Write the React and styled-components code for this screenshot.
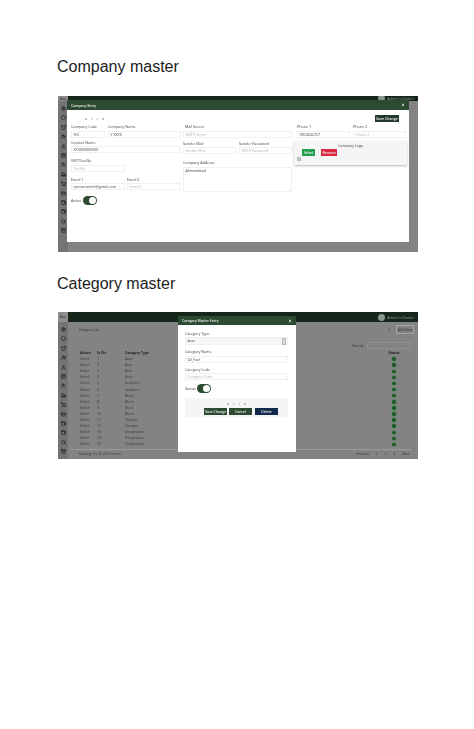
import React from "react";
import styled, { createGlobalStyle } from "styled-components";
import {
  Settings, Circle, Shirt, UserPlus, User, ShoppingBag, UserCheck, Truck, ShoppingCart,
  CreditCard, Wallet, Search, Archive, ImageOff, X,
} from "lucide-react";

const Global = createGlobalStyle`
  html, body { margin: 0; background: #fff; }
  body { font-family: "Liberation Sans", Arial, sans-serif; }
`;

const Page = styled.main`
  width: 474px;
  min-height: 729px;
  box-sizing: border-box;
  padding: 57px 56px 0 57px;
`;
const Heading = styled.h1`
  margin: ${(p) => p.$top}px 0 ${(p) => p.$bottom}px;
  font: 400 16px/20px "Liberation Sans", Arial, sans-serif;
  color: #1c1c1c;
`;
const Shot = styled.figure`
  position: relative;
  margin: 0 0 0 1px;
  width: 360px;
  height: ${(p) => p.$h}px;
  background: #838383;
  overflow: hidden;
  filter: blur(0.35px);
  display: grid;
  grid-template-columns: 10px 1fr;
  grid-template-rows: ${(p) => p.$bar}px 1fr;
  font-family: "Open Sans", Arial, sans-serif;
`;
const Brand = styled.div`
  background: #8d8d8d;
  color: #222;
  font-size: 3px;
  display: flex;
  align-items: center;
  justify-content: center;
`;
const TopBar = styled.div`
  background: #16261a;
  display: flex;
  align-items: center;
  justify-content: flex-end;
  gap: 2px;
  padding-right: 4px;
  color: #9a9a9a;
  font-size: 3.8px;
`;
const Avatar = styled.span`
  width: 7px;
  height: 7px;
  border-radius: 50%;
  background: #8a978c;
`;
const Side = styled.nav`
  background: #747474;
  display: flex;
  flex-direction: column;
  align-items: center;
  gap: 4.4px;
  padding-top: 5px;
  color: #1d1d1d;
  overflow: hidden;
  svg { width: 5px; height: 5px; flex: none; }
`;
const Content = styled.section`
  display: flex;
  flex-direction: column;
  padding: 3px 7px 0 3px;
  color: #2e2e2e;
  font-size: 3.4px;
  min-width: 0;
`;
const ListHead = styled.div`
  display: flex;
  justify-content: space-between;
  align-items: center;
  padding: 0 0 0 8px;
  height: 8px;
`;
const AddNew = styled.span`
  display: flex;
  align-items: center;
  gap: 6px;
  margin-right: -3px;
  white-space: nowrap;
  span:last-child {
    border: 0.5px solid #a5a5a5;
    padding: 1px 0;
    width: 16px;
    text-align: center;
  }
`;
const SearchRow = styled.div`
  margin-top: 9px;
  display: flex;
  justify-content: flex-end;
  align-items: center;
  gap: 3px;
  height: 6px;
  i { display: block; width: 42px; height: 5px; border: 0.5px solid #8f8f8f; }
`;
const Table = styled.table`
  margin-top: 2px;
  width: 100%;
  border-collapse: collapse;
  table-layout: fixed;
  th { font-weight: 700; color: #1f1f1f; text-align: left; padding: 0; }
  th:last-child { text-align: center; }
  td { padding: 0; color: #373737; }
  th:first-child, td:first-child { padding-left: 9px; }
  tr { height: 6.1px; }
  th, td { line-height: 6.1px; white-space: nowrap; }
`;
const Dot = styled.span`
  display: block;
  width: 3.5px;
  height: 3.5px;
  margin: 0 auto;
  border-radius: 50%;
  background: #1d5a28;
  box-shadow: 0 0 1px 0.5px #4a8f55;
`;
const TableFoot = styled.div`
  margin-top: 1px;
  padding: 0 0 0 8px;
  border-top: 0.5px solid #9a9a9a;
  display: flex;
  justify-content: space-between;
  align-items: center;
  height: 8px;
  font-size: 3.1px;
`;
const Pager = styled.div`
  display: flex;
  gap: 7px;
  padding-right: 2px;
`;

const Modal = styled.div`
  position: absolute;
  left: ${(p) => p.$left}px;
  top: ${(p) => p.$top}px;
  width: ${(p) => p.$w}px;
  height: ${(p) => p.$h}px;
  background: #fff;
  display: flex;
  flex-direction: column;
  color: #3d3d3d;
  font-size: 3.7px;
`;
const ModalHead = styled.header`
  flex: none;
  height: ${(p) => p.$h}px;
  background: #2c4a31;
  color: #f1f1f1;
  font-size: 3.4px;
  font-weight: 600;
  display: flex;
  align-items: center;
  justify-content: space-between;
  padding: 0 4px;
  svg { width: 4px; height: 4px; }
`;
const CompanyBody = styled.div`
  position: relative;
  flex: 1;
  display: grid;
  grid-template-columns: 110px 109px 113px;
  column-gap: 2px;
  padding: 14px 3px 0 4px;
`;
const Nav = styled.div`
  display: flex;
  justify-content: center;
  gap: 4px;
  color: #555;
  font-size: 3.6px;
  font-weight: 700;
`;
const TopNav = styled(Nav)`
  position: absolute;
  left: 18px;
  top: 6px;
`;
const SaveTop = styled.button`
  position: absolute;
  right: 10px;
  top: 5px;
  width: 24px;
  height: 7px;
  padding: 0;
  border: 0;
  background: #25392b;
  color: #eee;
  font: 600 3.5px "Open Sans", Arial, sans-serif;
`;
const Col = styled.div`
  display: flex;
  flex-direction: column;
  gap: ${(p) => p.$gap || 0}px;
`;
const Row = styled.div`
  display: grid;
  grid-template-columns: ${(p) => p.$cols};
  column-gap: ${(p) => p.$gap ?? 3}px;
  margin-top: ${(p) => p.$top || 0}px;
  padding-left: ${(p) => p.$pad || 0}px;
`;
const Field = styled.label`
  display: flex;
  flex-direction: column;
  gap: 1.5px;
  line-height: 5px;
`;
const FieldIndent = styled(Field)`
  > span { padding-left: 2px; }
`;
const Spaced = styled.div`
  margin-top: ${(p) => p.$top}px;
`;
const Input = styled.div`
  position: relative;
  height: ${(p) => p.$h || 7}px;
  box-sizing: border-box;
  border: 0.5px solid #f0f0f0;
  padding: 1px 1.5px;
  line-height: 4.5px;
  font-size: 3.6px;
  color: ${(p) => (p.$ph ? "#b4b4b4" : "#444")};
  background: #fff;
`;
const SelectBox = styled(Input)`
  display: flex;
  justify-content: space-between;
  align-items: center;
  background: #f6f6f6;
  height: 8px;
  color: #555;
  i { width: 4px; height: 7px; background: #ddd; border: 0.5px solid #b9b9b9; box-sizing: border-box; }
`;
const LogoCard = styled.div`
  margin-top: 3px;
  height: 24px;
  background: #f5f5f5;
  box-shadow: 0 1px 2px rgba(0, 0, 0, 0.28);
  display: flex;
  flex-direction: column;
  padding: 2px 3px;
  box-sizing: border-box;
  p { margin: 0; text-align: center; line-height: 5px; }
  svg { width: 4px; height: 4px; color: #666; margin-top: 1px; }
`;
const LogoButtons = styled.div`
  display: flex;
  gap: 6px;
  padding-left: 5px;
  margin-top: 1px;
`;
const Btn = styled.button`
  height: ${(p) => p.$h || 7}px;
  width: ${(p) => p.$w}px;
  margin-left: ${(p) => p.$ml || 0}px;
  padding: 0;
  border: 0;
  background: ${(p) => p.$bg};
  color: #eee;
  font: 600 3.4px "Open Sans", Arial, sans-serif;
`;
const ToggleRow = styled.div`
  display: flex;
  align-items: center;
  gap: 1.5px;
  margin-top: ${(p) => p.$top || 0}px;
`;
const Toggle = styled.span`
  display: block;
  width: 14px;
  height: 9px;
  border-radius: 5px;
  background: #2b4a30;
  position: relative;
  &::after {
    content: "";
    position: absolute;
    right: 1px;
    top: 1px;
    width: 7px;
    height: 7px;
    border-radius: 50%;
    background: #fff;
  }
`;
const CategoryBody = styled.div`
  flex: 1;
  display: flex;
  flex-direction: column;
  gap: 4px;
  padding: 5.5px 8px 0 7px;
`;
const ActionPanel = styled.div`
  margin-top: 1px;
  height: 19px;
  background: #f5f5f5;
  display: flex;
  flex-direction: column;
  align-items: center;
  padding-top: 3px;
  box-sizing: border-box;
  gap: 2px;
`;
const ActionButtons = styled.div`
  display: flex;
  gap: 2px;
  margin-left: 9px;
`;

const icons = [Settings, Circle, Shirt, UserPlus, User, ShoppingBag, UserCheck, Truck, ShoppingCart, CreditCard, Wallet, Wallet, Search, Archive];
const types = ["Area","Area","Area","Area","Southern","Southern","Block","Block","Block","Block","Charges","Charges","Designation","Designation","Designation"];

function Sidebar() {
  return <Side>{icons.map((I, i) => <I key={i} strokeWidth={3} />)}</Side>;
}
const F = ({ label, value, ph, h }) => (
  <Field>{label}<Input $ph={ph} $h={h}>{value || ph}</Input></Field>
);
const Arrows = () => <><span>«</span><span>‹</span><span>›</span><span>»</span></>;

export default function App() {
  return (
    <Page>
      <Global />
      <Heading $top={0} $bottom={19}>Company master</Heading>
      <Shot $h={156} $bar={5}>
        <Brand>Bass</Brand>
        <TopBar><Avatar /><span>Admin's Dealer</span></TopBar>
        <Sidebar />
        <Content />
        <Modal $left={9} $top={4} $w={342} $h={142}>
          <ModalHead $h={10}><span>Company Entry</span><X strokeWidth={4} /></ModalHead>
          <CompanyBody>
            <TopNav><Arrows /></TopNav>
            <SaveTop>Save Change</SaveTop>
            <Col $gap={2}>
              <Row $cols="34px 73px"><F label="Company Code" value="HO" /><F label="Company Name" value="Y XXXX" /></Row>
              <F label="Contact Name" value="XXXXXXXXXXXX" />
              <Row $cols="54px" $top={3}><F label="GST/Tax-No" ph="Tax No" /></Row>
              <Row $cols="54px 54px" $gap={2} $top={3}><F label="Email 1" value="vainsavzitech@gmail.com" /><F label="Email 2" ph="Email 2" /></Row>
              <ToggleRow $top={4}>Active<Toggle /></ToggleRow>
            </Col>
            <Col $gap={3}>
              <FieldIndent><span>Mail Server</span><Input $ph>SMTP Server</Input></FieldIndent>
              <Row $cols="53px 53px"><F label="Sender Mail" ph="Sender Mail" /><F label="Sender Password" ph="SMTP Password" /></Row>
              <Spaced $top={3}><F label="Company Address" value="Ahmedabad" h={25} /></Spaced>
            </Col>
            <Col>
              <Row $cols="53px 53px" $pad={3}><F label="Phone 1" value="9904042257" /><F label="Phone 2" ph="Phone 2" /></Row>
              <LogoCard>
                <p>Company Logo</p>
                <LogoButtons>
                  <Btn $w={13} $bg="#22a04c">Select</Btn>
                  <Btn $w={16} $bg="#d9283f">Remove</Btn>
                </LogoButtons>
                <ImageOff />
              </LogoCard>
            </Col>
          </CompanyBody>
        </Modal>
      </Shot>

      <Heading $top={22} $bottom={18}>Category master</Heading>
      <Shot $h={147} $bar={10}>
        <Brand>Bass</Brand>
        <TopBar><Avatar /><span>Admin's Dealer</span></TopBar>
        <Sidebar />
        <Content>
          <ListHead><span>Category List</span><AddNew><span>?</span><span>Add New</span></AddNew></ListHead>
          <SearchRow><span>Search:</span><i /></SearchRow>
          <Table>
            <colgroup><col style={{ width: 26 }} /><col style={{ width: 28 }} /><col /><col style={{ width: 34 }} /></colgroup>
            <thead><tr><th>Action</th><th>Sr.No</th><th>Category Type</th><th>Status</th></tr></thead>
            <tbody>
              {types.map((t, i) => (
                <tr key={i}><td>Select</td><td>{i + 1}</td><td>{t}</td><td><Dot /></td></tr>
              ))}
            </tbody>
          </Table>
          <TableFoot><span>Showing 1 to 15 of 67 entries</span><Pager><span>Previous</span><span>1</span><span>2</span><span>3</span><span>Next</span></Pager></TableFoot>
        </Content>
        <Modal $left={120} $top={4} $w={118} $h={136}>
          <ModalHead $h={9}><span>Category Master Entry</span><X strokeWidth={4} /></ModalHead>
          <CategoryBody>
            <Field>Category Type<SelectBox>Area<i /></SelectBox></Field>
            <F label="Category Name" value="Oil,Fuel" />
            <F label="Category Code" ph="Category Code" />
            <ToggleRow>Status<Toggle /></ToggleRow>
            <ActionPanel>
              <Nav><Arrows /></Nav>
              <ActionButtons>
                <Btn $w={23} $bg="#2d4a31">Save Change</Btn>
                <Btn $w={23} $bg="#2d4a31">Cancel</Btn>
                <Btn $w={23} $ml={1} $bg="#13294b">Delete</Btn>
              </ActionButtons>
            </ActionPanel>
          </CategoryBody>
        </Modal>
      </Shot>
    </Page>
  );
}
